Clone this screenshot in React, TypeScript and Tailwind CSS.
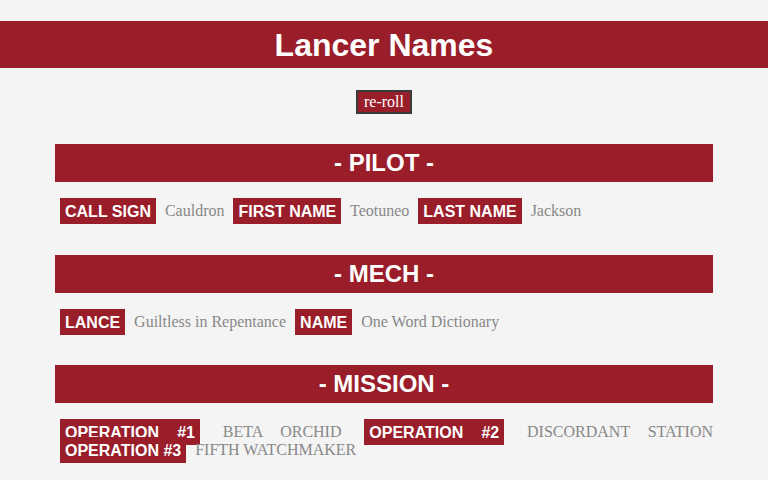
const sans = "font-['Liberation_Sans',Arial,sans-serif]";

type Entry = { label: string; value: string };

const sections: { title: string; gap: string; entries: Entry[] }[] = [
  {
    title: '- PILOT -',
    gap: 'mt-[30px]',
    entries: [
      { label: 'CALL SIGN', value: 'Cauldron' },
      { label: 'FIRST NAME', value: 'Teotuneo' },
      { label: 'LAST NAME', value: 'Jackson' },
    ],
  },
  {
    title: '- MECH -',
    gap: 'mt-[35px]',
    entries: [
      { label: 'LANCE', value: 'Guiltless in Repentance' },
      { label: 'NAME', value: 'One Word Dictionary' },
    ],
  },
  {
    title: '- MISSION -',
    gap: 'mt-[34px]',
    entries: [
      { label: 'OPERATION #1', value: 'BETA ORCHID' },
      { label: 'OPERATION #2', value: 'DISCORDANT STATION' },
      { label: 'OPERATION #3', value: 'FIFTH WATCHMAKER' },
    ],
  },
];

function Section({ title, entries, gap }: { title: string; entries: Entry[]; gap: string }) {
  return (
    <section className={gap}>
      {/* Section bar */}
      <h2
        className={`${sans} h-[38px] flex items-center justify-center bg-[#9a1d2a] text-white text-[24px] font-bold leading-none`}
      >
        {title}
      </h2>

      {/* Justified inline entries */}
      <p className="mt-[20px] text-justify leading-[18px] text-[16px] text-[#888888] font-['Liberation_Serif','Times_New_Roman',serif]">
        {entries.map((e, i) => (
          <span key={e.label}>
            <span
              className={`${sans} mx-[5px] px-[5px] py-[4.5px] bg-[#9a1d2a] text-white font-bold`}
            >
              {e.label}
            </span>{' '}
            {e.value}
            {i < entries.length - 1 ? ' ' : ''}
          </span>
        ))}
      </p>
    </section>
  );
}

export default function App() {
  return (
    <div className="min-h-screen bg-[#f4f4f4] pt-[21px] pb-8">
      {/* Header */}
      <h1
        className={`${sans} h-[47px] flex items-center justify-center bg-[#9a1d2a] text-white text-[32px] font-bold leading-none`}
      >
        Lancer Names
      </h1>

      {/* Re-roll button */}
      <div className="mt-[22px] flex justify-center">
        <button className="h-[24px] px-[6px] border-2 border-[#3a3a3a] bg-[#9a1d2a] text-white text-[16px] leading-none font-['Liberation_Serif','Times_New_Roman',serif]">
          re-roll
        </button>
      </div>

      <div className="mx-[55px]">
        {sections.map((s) => (
          <Section key={s.title} title={s.title} entries={s.entries} gap={s.gap} />
        ))}
      </div>
    </div>
  );
}
